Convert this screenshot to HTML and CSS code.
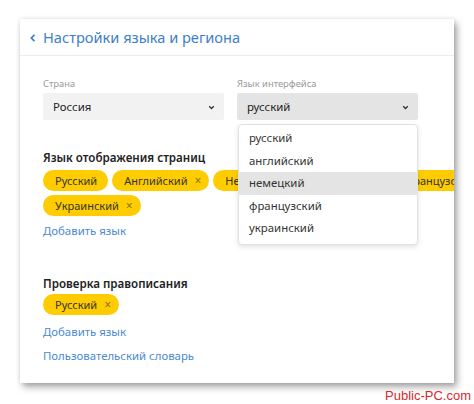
FILE: index.html
```html
<!DOCTYPE html>
<html lang="ru">
<head>
<meta charset="utf-8">
<link rel="stylesheet" href="styles.css">
</head>
<body>
<div class="card">
  <div class="header">
    <svg class="back" width="8" height="10" viewBox="0 0 8 10"><path d="M5.5 1.8 L2.3 5 L5.5 8.2" fill="none" stroke="#3d7fc8" stroke-width="1.7"/></svg>
    <span class="title">Настройки языка и региона</span>
  </div>
  <div class="content">
    <div class="selects">
      <div class="field">
        <div class="label">Страна</div>
        <div class="select">Россия<svg class="chev" width="7" height="5" viewBox="0 0 7 5"><path d="M1.2 1.2 L3.5 3.5 L5.8 1.2" fill="none" stroke="#333" stroke-width="1.3"/></svg></div>
      </div>
      <div class="field">
        <div class="label">Язык интерфейса</div>
        <div class="select select-active">русский<svg class="chev" width="7" height="5" viewBox="0 0 7 5"><path d="M1.2 1.2 L3.5 3.5 L5.8 1.2" fill="none" stroke="#333" stroke-width="1.3"/></svg></div>
        <ul class="dropdown">
          <li>русский</li>
          <li>английский</li>
          <li class="hover">немецкий</li>
          <li>французский</li>
          <li>украинский</li>
        </ul>
      </div>
    </div>

    <h3 class="heading">Язык отображения страниц</h3>
    <div class="tags">
      <span class="tag">Русский</span>
      <span class="tag">Английский<span class="x">×</span></span>
      <span class="tag">Немецкий<span class="x">×</span></span>
      <span class="tag tag-far">Французский<span class="x">×</span></span>
    </div>
    <div class="tags">
      <span class="tag">Украинский<span class="x">×</span></span>
    </div>
    <a class="link link-add">Добавить язык</a>

    <h3 class="heading heading-2">Проверка правописания</h3>
    <div class="tags">
      <span class="tag">Русский<span class="x">×</span></span>
    </div>
    <a class="link link-add-2">Добавить язык</a>
    <a class="link link-next">Пользовательский словарь</a>
  </div>
</div>
<div class="watermark">Public-PC.com</div>
</body>
</html>
```

FILE: styles.css
```css
html, body {
  margin: 0;
  padding: 0;
  background: #fff;
}
body {
  padding: 19px 20px 0 20px;
  font-family: "Noto Sans", "Open Sans", sans-serif;
  color: #222;
  position: relative;
  height: 404px;
  box-sizing: border-box;
}
.card {
  width: 434px;
  height: 364px;
  background: #fff;
  box-shadow: 0 0 4px rgba(0,0,0,0.10), 3px 4px 7px rgba(0,0,0,0.35);
  overflow: hidden;
  position: relative;
}
.header {
  height: 37px;
  border-bottom: 1px solid #ececec;
  display: flex;
  align-items: center;
  padding-left: 9px;
  box-sizing: border-box;
}
.back {
  margin-right: 6px;
  margin-top: 1px;
}
.title {
  font-size: 14.6px;
  color: #3d7fc8;
}
.content {
  padding: 21px 0 0 23px;
}
.selects {
  display: flex;
  gap: 13px;
}
.field {
  width: 181px;
  position: relative;
}
.label {
  font-size: 9.4px;
  color: #9a9a9a;
  line-height: 13px;
  height: 16px;
}
.select {
  height: 27px;
  background: #f2f2f2;
  border-radius: 2px;
  display: flex;
  align-items: center;
  justify-content: space-between;
  padding: 0 9px 0 10px;
  font-size: 11.4px;
  color: #222;
}
.select-active {
  background: #e4e4e4;
}
.chev {
  margin-top: 1px;
}
.dropdown {
  position: absolute;
  top: 47px;
  left: 1px;
  width: 180px;
  margin: 0;
  padding: 2px 0 4px 0;
  list-style: none;
  background: #fff;
  border: 1px solid #e2e2e2;
  border-radius: 4px;
  box-shadow: 0 2px 5px rgba(0,0,0,0.12);
  z-index: 2;
  box-sizing: border-box;
}
.dropdown li {
  height: 22.6px;
  line-height: 22.6px;
  padding-left: 10px;
  font-size: 11.4px;
  color: #333;
}
.dropdown li.hover {
  background: #e4e4e4;
}
.heading {
  margin: 29px 0 3px 0;
  font-size: 11.6px;
  font-weight: 600;
  line-height: 18px;
  color: #222;
}
.heading-2 {
  margin-top: 35px;
  margin-bottom: 1px;
}
.tags {
  display: flex;
  gap: 4px;
  white-space: nowrap;
  margin-bottom: 4px;
}
.tag {
  display: inline-flex;
  align-items: center;
  height: 21px;
  padding: 0 11px 0 12px;
  background: #ffcc00;
  border-radius: 11px;
  font-size: 11px;
  color: #333;
  flex: none;
}
.tag .x {
  margin-left: 7px;
  margin-right: -3px;
  color: #8a7420;
  font-size: 12px;
}
.tag-far {
  margin-left: 86px;
}
.link {
  display: block;
  font-size: 11.4px;
  color: #4a8ad0;
  line-height: 18px;
}
.link-add {
  margin-top: 6px;
}
.link-add-2 {
  margin-top: 8px;
}
.link-next {
  margin-top: 6px;
}
.watermark {
  position: absolute;
  top: 388px;
  right: 3px;
  white-space: nowrap;
  font-family: "Liberation Sans", Arial, sans-serif;
  font-size: 13px;
  color: #d6282e;
}
```
